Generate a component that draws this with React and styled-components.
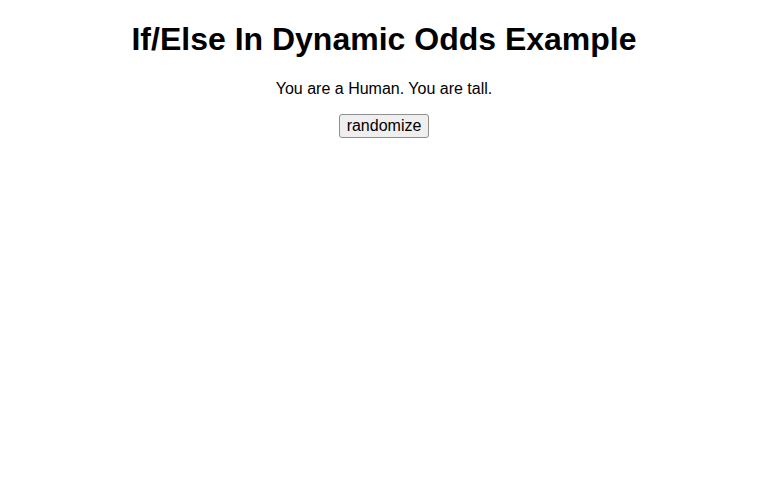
import React, { useState } from "react";
import styled, { createGlobalStyle } from "styled-components";

const GlobalStyle = createGlobalStyle`
  body {
    margin: 8px;
    background: #fff;
    color: #000;
    font-family: "Liberation Sans", Arial, sans-serif;
  }
`;

const Page = styled.div`
  text-align: center;
`;

const Title = styled.h1`
  font-size: 32px;
  font-weight: bold;
  margin: 13px 0 22px;
`;

const Status = styled.p`
  font-size: 16px;
  margin: 16px 0;
`;

const RandomButton = styled.button`
  font-family: "Liberation Sans", Arial, sans-serif;
  font-size: 16px;
  line-height: 18px;
  color: #000;
  background: #efefef;
  border: 1px solid #8f8f8f;
  border-radius: 3px;
  padding: 1px 7px;
  height: 24px;
  cursor: pointer;
  &:hover {
    background: #e5e5e5;
  }
`;

const races = ["Human", "Elf", "Dwarf", "Orc"];

export default function App() {
  const [race, setRace] = useState("Human");
  const [tall, setTall] = useState(true);

  const randomize = () => {
    setRace(races[Math.floor(Math.random() * races.length)]);
    setTall(Math.random() < 0.5);
  };

  return (
    <Page>
      <GlobalStyle />
      <Title>If/Else In Dynamic Odds Example</Title>
      <Status>
        You are a {race}. {tall ? "You are tall." : "You are short."}
      </Status>
      <RandomButton onClick={randomize}>randomize</RandomButton>
    </Page>
  );
}
